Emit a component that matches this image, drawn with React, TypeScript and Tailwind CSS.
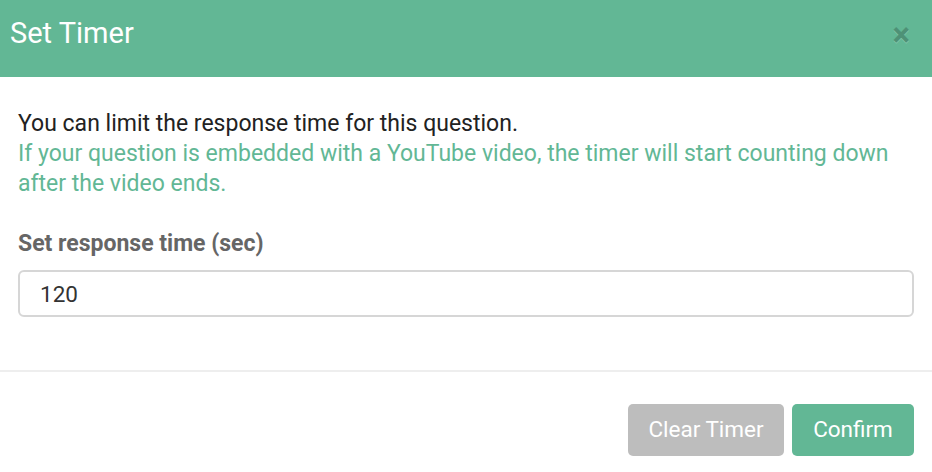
import { useState } from 'react'

export default function App() {
  const [seconds, setSeconds] = useState('120')

  return (
    <div className="w-[932px] h-[472px] bg-white overflow-hidden" style={{ fontFamily: 'Roboto, "Liberation Sans", sans-serif' }}>
      <div className="h-[77px] bg-[#62b795] flex items-start justify-between pl-[10px] pr-[22px]">
        <h2 className="text-white text-[29px] leading-[34px] mt-[16px]">Set Timer</h2>
        <button className="mt-[18px] text-[33px] leading-[33px] font-bold text-black opacity-20 [text-shadow:0_1px_0_#fff]">
          ×
        </button>
      </div>

      <div className="px-[18px] pt-[32px] pb-[53px]">
        <p className="text-[23px] leading-[30px] text-[#222]">You can limit the response time for this question.</p>
        <p className="text-[23px] leading-[30px] text-[#62b795]">
          If your question is embedded with a YouTube video, the timer will start counting down after the video ends.
        </p>

        <label className="block mt-[30px] text-[23px] leading-[30px] font-bold text-[#666]">Set response time (sec)</label>
        <input
          type="text"
          value={seconds}
          onChange={(e) => setSeconds(e.target.value)}
          className="mt-[11px] w-[896px] h-[47px] px-[20px] border-2 border-[#d6d6d6] rounded-[6px] text-[22.5px] text-[#333] outline-none"
        />
      </div>

      <div className="border-t-2 border-[#eeeeee]" />

      <div className="flex justify-end gap-[8px] pt-[32px] pr-[18px]">
        <button className="w-[156px] h-[52px] rounded-[5px] bg-[#bdbdbd] text-white text-[22.5px]">Clear Timer</button>
        <button className="w-[122px] h-[52px] rounded-[5px] bg-[#62b795] text-white text-[22.5px]">Confirm</button>
      </div>
    </div>
  )
}
